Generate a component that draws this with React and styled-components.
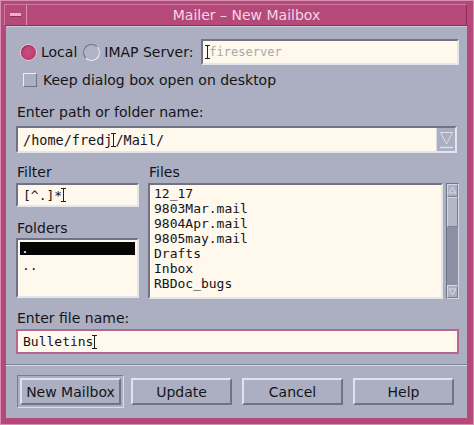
import styled, { createGlobalStyle, css } from "styled-components";

const GlobalStyle = createGlobalStyle`
  html, body { margin: 0; padding: 0; background: #b4497a; }
  * { box-sizing: border-box; }
`;

const sans = `"DejaVu Sans", "Liberation Sans", sans-serif`;
const mono = `"DejaVu Sans Mono", "Liberation Mono", monospace`;

const sunken = css`
  border-style: solid;
  border-width: 2px;
  border-color: #6f7385 #e4e6ee #e4e6ee #6f7385;
`;

const raised = css`
  border-style: solid;
  border-width: 2px;
  border-color: #e0e2ec #6f7385 #6f7385 #e0e2ec;
`;

const Frame = styled.div`
  width: 474px;
  height: 425px;
  background: #b4497a;
  border: 1px solid #d98fb2;
  padding: 3px 6px 6px 3px;
  display: flex;
  flex-direction: column;
  font-family: ${sans};
`;

const TitleBar = styled.div`
  height: 22px;
  display: flex;
  align-items: stretch;
  border: 1px solid #d07aa2;
  border-bottom-color: #8e2f5a;
  border-right-color: #8e2f5a;
  background: #b4497a;
`;

const MenuButton = styled.div`
  width: 22px;
  display: flex;
  align-items: center;
  justify-content: center;
  border-right: 1px solid #d993b4;

  &::after {
    content: "";
    width: 11px;
    height: 3px;
    background: #e6b3cb;
    border-bottom: 1px solid #8e2f5a;
  }
`;

const Title = styled.div`
  flex: 1;
  text-align: center;
  color: #f3d6e4;
  font-size: 14px;
  line-height: 20px;
`;

const Content = styled.div`
  flex: 1;
  margin-left: 2px;
  background: #abafc1;
  border-top: 1px solid #c9ccd8;
  display: flex;
  flex-direction: column;
  color: #141418;
  font-size: 14px;
`;

const Body = styled.div`
  padding: 12px 8px 0 10px;
  display: flex;
  flex-direction: column;
`;

const SourceRow = styled.div`
  display: flex;
  align-items: center;
  height: 26px;
  padding-left: 4px;
`;

const Radio = styled.span`
  width: 17px;
  height: 17px;
  border-radius: 50%;
  margin-right: 4px;
  flex-shrink: 0;
  ${({ $on }) =>
    $on
      ? css`
          background: radial-gradient(circle at 45% 45%, #cd4f80 0, #bb3d6f 70%);
          border: 1px solid #f0c6d8;
          box-shadow: inset 1px 1px 0 #8d2a55;
        `
      : css`
          background: #b0b4c5;
          border: 1px solid;
          border-color: #6f7385 #eef0f5 #eef0f5 #6f7385;
        `}
`;

const OptionText = styled.span`
  margin-right: ${({ $gap }) => $gap}px;
  white-space: nowrap;
`;

const Field = styled.div`
  ${sunken};
  background: #fff8ec;
  height: ${({ $h }) => $h}px;
  display: flex;
  align-items: center;
  padding-left: ${({ $pad }) => $pad ?? 5}px;
  font-family: ${mono};
  font-size: ${({ $dim }) => ($dim ? 12 : 13)}px;
  color: ${({ $dim }) => ($dim ? "#a8a8ac" : "#141418")};
  flex: ${({ $grow }) => ($grow ? 1 : "none")};
  white-space: nowrap;
  ${({ $focus }) =>
    $focus &&
    css`
      border-color: #b8668b;
      border-width: 2px;
    `}
`;

const Caret = styled.span`
  display: inline-block;
  position: relative;
  width: 1px;
  height: 14px;
  margin: 0 1px;
  background: #202020;

  &::before,
  &::after {
    content: "";
    position: absolute;
    left: -2px;
    width: 5px;
    height: 1px;
    background: #202020;
  }
  &::before { top: 0; }
  &::after { bottom: 0; }
`;

const CheckRow = styled.label`
  display: flex;
  align-items: center;
  margin-top: 7px;
  padding-left: 7px;
  height: 16px;
`;

const CheckBox = styled.span`
  width: 14px;
  height: 14px;
  margin-right: 6px;
  border: 1px solid;
  border-color: #eceef4 #6f7385 #6f7385 #eceef4;
  background: #abafc1;
`;

const Label = styled.div`
  margin-top: ${({ $mt }) => $mt}px;
  height: 16px;
  line-height: 16px;
  padding-left: 1px;
`;

const Combo = styled.div`
  ${sunken};
  margin-top: 6px;
  height: 27px;
  display: flex;
  margin-right: 2px;
  background: #abafc1;
`;

const ComboText = styled.div`
  flex: 1;
  background: #fff8ec;
  display: flex;
  align-items: center;
  padding-left: 5px;
  font-family: ${mono};
  font-size: 13.5px;
  white-space: nowrap;
`;

const ComboArrow = styled.div`
  width: 19px;
  display: flex;
  align-items: center;
  justify-content: center;
  border-left: 1px solid #d6d8e2;
`;

const Lists = styled.div`
  display: grid;
  grid-template-columns: 123px 1fr;
  column-gap: 9px;
  margin-top: 11px;
`;

const Column = styled.div`
  display: flex;
  flex-direction: column;
`;

const ListBox = styled.div`
  ${sunken};
  background: #fff8ec;
  height: ${({ $h }) => $h}px;
  padding: 1px 2px;
  font-family: ${mono};
  font-size: 13px;
  line-height: 15px;
  flex: 1;
`;

const ListItem = styled.div`
  height: ${({ $h }) => $h ?? 15}px;
  line-height: ${({ $h }) => $h ?? 15}px;
  padding-left: ${({ $pad }) => $pad ?? 2}px;
  overflow: hidden;
  ${({ $selected }) =>
    $selected &&
    css`
      background: #050505;
      color: #ffffff;
      margin: 1px 0 3px;
    `}
`;

const FilesWrap = styled.div`
  display: flex;
  gap: 3px;
  margin-top: 3px;
  height: 116px;
`;

const ScrollBar = styled.div`
  width: 13px;
  border: 1px solid;
  border-color: #6f7385 #d6d8e2 #d6d8e2 #6f7385;
  background: #8c90a4;
  display: flex;
  flex-direction: column;
`;

const ScrollPart = styled.div`
  height: ${({ $h }) => $h}px;
  background: ${({ $bg }) => $bg};
  border: 1px solid;
  border-color: #d6d8e2 #7a7e90 #7a7e90 #d6d8e2;
  display: flex;
  align-items: center;
  justify-content: center;
  margin-top: ${({ $push }) => ($push ? "auto" : 0)};
`;

const Separator = styled.div`
  margin-top: 10px;
  border-top: 1px solid #7d8194;
  border-bottom: 1px solid #d9dbe5;
`;

const ButtonRow = styled.div`
  display: flex;
  gap: 10px;
  padding: 12px 0 0 11px;
`;

const DefaultRing = styled.div`
  padding: 2px;
  border: 1px solid;
  border-color: #7a7e90 #dadce6 #dadce6 #7a7e90;
  margin: -3px -3px -3px 0;
`;

const Button = styled.button`
  ${raised};
  width: 101px;
  height: 27px;
  background: #abafc1;
  font-family: ${sans};
  font-size: 14px;
  color: #141418;
  padding: 0;
`;

function Arrow({ up }) {
  return (
    <svg width="9" height="9" viewBox="0 0 9 9">
      <path
        d={up ? "M1 7 L4.5 1 L8 7 Z" : "M1 2 L4.5 8 L8 2 Z"}
        fill="none"
        stroke="#d8dae4"
        strokeWidth="1"
      />
    </svg>
  );
}

function DropGlyph() {
  return (
    <svg width="15" height="20" viewBox="0 0 15 20">
      <path d="M1.5 2.5 L13.5 2.5 L7.5 14 Z" fill="none" stroke="#dcdee8" strokeWidth="1" />
      <path d="M1 17.5 L14 17.5" stroke="#dcdee8" strokeWidth="1.5" />
    </svg>
  );
}

const files = ["12_17", "9803Mar.mail", "9804Apr.mail", "9805may.mail", "Drafts", "Inbox", "RBDoc_bugs"];

export default function App() {
  return (
    <>
      <GlobalStyle />
      <Frame>
        <TitleBar>
          <MenuButton />
          <Title>Mailer – New Mailbox</Title>
        </TitleBar>
        <Content>
          <Body>
            <SourceRow>
              <Radio $on />
              <OptionText $gap={6}>Local</OptionText>
              <Radio />
              <OptionText $gap={8}>IMAP Server:</OptionText>
              <Field $h={26} $grow $dim $pad={3}>
                <Caret />
                fireserver
              </Field>
            </SourceRow>
            <CheckRow>
              <CheckBox />
              Keep dialog box open on desktop
            </CheckRow>

            <Label $mt={16}>Enter path or folder name:</Label>
            <Combo>
              <ComboText>
                /home/fredj
                <Caret />
                /Mail/
              </ComboText>
              <ComboArrow>
                <DropGlyph />
              </ComboArrow>
            </Combo>

            <Lists>
              <Column>
                <Label $mt={0}>Filter</Label>
                <Field $h={24} style={{ marginTop: 3 }}>
                  [^.]*
                  <Caret />
                </Field>
                <Label $mt={13}>Folders</Label>
                <ListBox $h={60} style={{ marginTop: 2, flex: "none" }}>
                  <ListItem $selected $h={13} $pad={1}>.</ListItem>
                  <ListItem>..</ListItem>
                </ListBox>
              </Column>
              <Column>
                <Label $mt={0}>Files</Label>
                <FilesWrap>
                  <ListBox>
                    {files.map((f) => (
                      <ListItem key={f}>{f}</ListItem>
                    ))}
                  </ListBox>
                  <ScrollBar>
                    <ScrollPart $h={13} $bg="#abafc1">
                      <Arrow up />
                    </ScrollPart>
                    <ScrollPart $h={30} $bg="#b3b7c8" />
                    <ScrollPart $h={13} $bg="#abafc1" $push>
                      <Arrow />
                    </ScrollPart>
                  </ScrollBar>
                </FilesWrap>
              </Column>
            </Lists>

            <Label $mt={11}>Enter file name:</Label>
            <Field $h={25} $focus style={{ marginTop: 3 }}>
              Bulletins
              <Caret />
            </Field>
          </Body>
          <Separator />
          <ButtonRow>
            <DefaultRing>
              <Button>New Mailbox</Button>
            </DefaultRing>
            <Button>Update</Button>
            <Button>Cancel</Button>
            <Button>Help</Button>
          </ButtonRow>
        </Content>
      </Frame>
    </>
  );
}
